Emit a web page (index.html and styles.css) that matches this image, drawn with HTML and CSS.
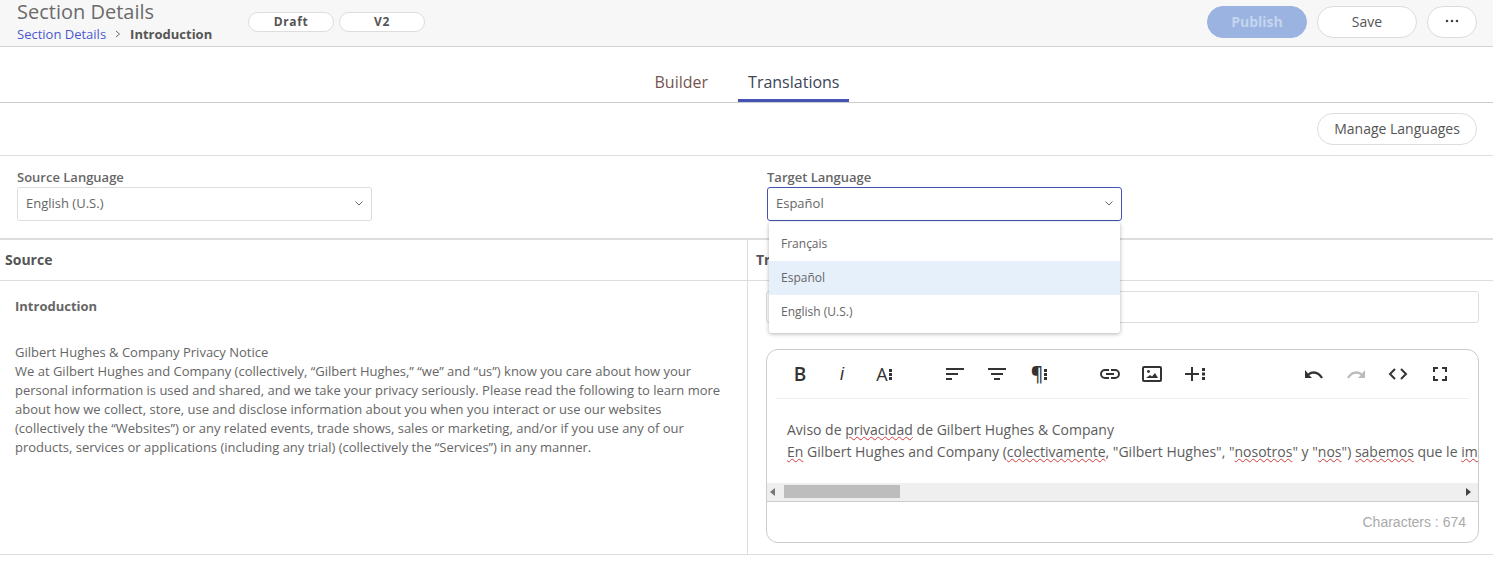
FILE: index.html
```html
<!DOCTYPE html>
<html lang="en">
<head>
    <meta charset="UTF-8">
    <title>Section Details</title>
    <link rel="stylesheet" href="styles.css">
</head>
<body>
    <div class="topbar">
        <div class="titles">
            <div class="page-title">Section Details</div>
            <div class="crumbs">
                <a href="#">Section Details</a>
                <svg class="crumb-sep" width="8" height="8" viewBox="0 0 8 8"><path d="M2 1l3.500 3-3.500 3" fill="none" stroke="#666" stroke-width="1"/></svg>
                <b>Introduction</b>
            </div>
        </div>
        <div class="pills">
            <span class="pill">Draft</span>
            <span class="pill">V2</span>
        </div>
        <div class="actions">
            <button class="btn publish">Publish</button>
            <button class="btn save">Save</button>
            <button class="btn more">
                <svg width="14" height="4" viewBox="0 0 14 4"><circle cx="2" cy="2" r="1.300" fill="#444"/><circle cx="7" cy="2" r="1.300" fill="#444"/><circle cx="12" cy="2" r="1.300" fill="#444"/></svg>
            </button>
        </div>
    </div>

    <div class="tabs">
        <span class="tab">Builder</span>
        <span class="tab active">Translations</span>
    </div>

    <div class="manage-row">
        <button class="btn manage">Manage Languages</button>
    </div>

    <div class="language-row">
        <div class="field">
            <label>Source Language</label>
            <div class="select">
                <span>English (U.S.)</span>
                <svg width="8" height="5" viewBox="0 0 8 5"><path d="M.5.500l3.500 3.500 3.500-3.500" fill="none" stroke="#666" stroke-width="1"/></svg>
            </div>
        </div>
        <div class="field">
            <label>Target Language</label>
            <div class="select open">
                <span>Español</span>
                <svg width="8" height="5" viewBox="0 0 8 5"><path d="M.5.500l3.500 3.500 3.500-3.500" fill="none" stroke="#666" stroke-width="1"/></svg>
                <ul class="options">
                    <li>Français</li>
                    <li class="selected">Español</li>
                    <li>English (U.S.)</li>
                </ul>
            </div>
        </div>
    </div>

    <div class="grid">
        <div class="cell head">Source</div>
        <div class="cell head right">Translation</div>
        <div class="cell source">
            <h4>Introduction</h4>
            <p>Gilbert Hughes &amp; Company Privacy Notice<br>We at Gilbert Hughes and Company (collectively, “Gilbert Hughes,” “we” and “us”) know you care about how your personal information is used and shared, and we take your privacy seriously. Please read the following to learn more about how we collect, store, use and disclose information about you when you interact or use our websites (collectively the “Websites”) or any related events, trade shows, sales or marketing, and/or if you use any of our products, services or applications (including any trial) (collectively the “Services”) in any manner.</p>
        </div>
        <div class="cell right target">
            <div class="title-input"></div>
            <div class="editor">
                <div class="toolbar">
                    <div class="tool-group">
                        <span class="tool glyph bold">B</span>
                        <span class="tool glyph ital">i</span>
                        <span class="tool glyph">A<svg class="dots" width="3" height="11" viewBox="0 0 3 11"><path d="M0 0h3v3H0zM0 4h3v3H0zM0 8h3v3H0z" fill="#333"/></svg></span>
                    </div>
                    <div class="tool-group">
                        <span class="tool"><svg width="18" height="12" viewBox="0 0 18 12"><path d="M0 0h18v2H0zM0 5h12v2H0zM0 10h6v2H0z" fill="#333"/></svg></span>
                        <span class="tool"><svg width="18" height="12" viewBox="0 0 18 12"><path d="M0 0h18v2H0zM3 5h12v2H3zM6 10h6v2H6z" fill="#333"/></svg></span>
                        <span class="tool glyph para">¶<svg class="dots" width="3" height="11" viewBox="0 0 3 11"><path d="M0 0h3v3H0zM0 4h3v3H0zM0 8h3v3H0z" fill="#333"/></svg></span>
                    </div>
                    <div class="tool-group">
                        <span class="tool"><svg width="20" height="10" viewBox="0 0 20 10"><path d="M9 1H5a4 4 0 0 0 0 8h4M11 1h4a4 4 0 0 1 0 8h-4M6 5h8" fill="none" stroke="#333" stroke-width="1.900"/></svg></span>
                        <span class="tool"><svg width="20" height="16" viewBox="0 0 20 16"><rect x="1" y="1" width="18" height="14" rx="1" fill="none" stroke="#333" stroke-width="2"/><circle cx="6.500" cy="5.500" r="1.400" fill="#333"/><path d="M4 12l4-3 2 1.500 3-3.500 3 5z" fill="#333"/></svg></span>
                        <span class="tool"><svg width="21" height="14" viewBox="0 0 21 14"><path d="M7 0h2v6h6v2H9v6H7V8H1V6h6zM18 1h3v3h-3zM18 5.500h3v3h-3zM18 10h3v3h-3z" fill="#333"/></svg></span>
                    </div>
                    <div class="tool-group end">
                        <span class="tool"><svg width="18" height="9" viewBox="0 0 18 9"><path d="M0 0v8h7L4.300 5.300C7.500 2.800 12.500 3.200 16 8.500L18 7.500C14 .5 7.500-.5 3 3.500z" fill="#333"/></svg></span>
                        <span class="tool"><svg width="18" height="9" viewBox="0 0 18 9"><path d="M18 0v8h-7l2.700-2.700C10.500 2.800 5.500 3.200 2 8.500L0 7.500C4 .5 10.500-.5 15 3.500z" fill="#bbb"/></svg></span>
                        <span class="tool"><svg width="20" height="12" viewBox="0 0 20 12"><path d="M7 1L2 6l5 5M13 1l5 5-5 5" fill="none" stroke="#333" stroke-width="2"/></svg></span>
                        <span class="tool"><svg width="14" height="14" viewBox="0 0 14 14"><path d="M5 1H1v4M9 1h4v4M5 13H1V9M9 13h4V9" fill="none" stroke="#333" stroke-width="2"/></svg></span>
                    </div>
                </div>
                <div class="editor-text">
                    <div>Aviso de <u>privacidad</u> de Gilbert Hughes &amp; Company</div>
                    <div><u>En</u> Gilbert Hughes and Company (<u>colectivamente</u>, "Gilbert Hughes", "<u>nosotros</u>" y "<u>nos</u>") <u>sabemos</u> que le <u>importa</u> cómo se utiliza y comparte su información personal</div>
                </div>
                <div class="scrollbar">
                    <svg width="5" height="8" viewBox="0 0 5 8"><path d="M5 0v8L0 4z" fill="#777"/></svg>
                    <div class="thumb"></div>
                    <svg class="arrow-right" width="5" height="8" viewBox="0 0 5 8"><path d="M0 0v8l5-4z" fill="#444"/></svg>
                </div>
                <div class="counter">Characters : 674</div>
            </div>
        </div>
    </div>
</body>
</html>
```

FILE: styles.css
```css
* {
    box-sizing: border-box;
}

body {
    margin: 0;
    font-family: "Open Sans", sans-serif;
    font-size: 13px;
    color: #666;
    background-color: #fff;
    overflow: hidden;
}

button {
    font-family: inherit;
}

/* Top bar */
.topbar {
    display: flex;
    align-items: flex-start;
    height: 47px;
    padding-left: 17px;
    padding-right: 16px;
    background-color: #f7f7f7;
    border-bottom: 1px solid #d4d4d4;
}

.titles {
    width: 231px;
}

.page-title {
    height: 25px;
    font-size: 20px;
    line-height: 23px;
    color: #6b6b6b;
}

.crumbs {
    display: flex;
    align-items: center;
    height: 18px;
    line-height: 18px;
}

.crumbs a {
    color: #4a57d0;
    text-decoration: none;
}

.crumb-sep {
    margin: 0 8px;
}

.crumbs b {
    color: #555;
}

.pills {
    display: flex;
    gap: 5px;
    margin-top: 12px;
}

.pill {
    width: 86px;
    height: 20px;
    border: 1px solid #ddd;
    border-radius: 10px;
    background-color: #fff;
    font-size: 12px;
    font-weight: 700;
    line-height: 18px;
    letter-spacing: 0.6px;
    text-align: center;
    color: #555;
}

.actions {
    display: flex;
    gap: 10px;
    margin-top: 6px;
    margin-left: auto;
}

.btn {
    height: 32px;
    padding: 0 0 2px;
    border: 1px solid #ddd;
    border-radius: 16px;
    background-color: #fff;
    font-size: 14px;
    color: #555;
}

.publish {
    width: 100px;
    border-color: #9ab3e0;
    background-color: #9ab3e0;
    font-weight: 700;
    color: #c5d5f0;
}

.save {
    width: 100px;
}

.more {
    width: 50px;
}

.more svg {
    display: block;
    margin: 0 auto;
}

/* Tabs */
.tabs {
    display: flex;
    justify-content: center;
    gap: 20px;
    height: 56px;
    padding-left: 1px;
    border-bottom: 1px solid #ccc;
}

.tab {
    height: 55px;
    padding: 22px 10px 0;
    font-size: 16px;
    line-height: 26px;
    color: #75554f;
}

.tab.active {
    color: #3d4457;
    border-bottom: 3px solid #4553b5;
}

.manage-row {
    display: flex;
    justify-content: flex-end;
    height: 53px;
    padding: 10px 16px 0;
    border-bottom: 1px solid #ddd;
}

.manage {
    width: 160px;
}

/* Language selects */
.language-row {
    display: flex;
    height: 84px;
    padding: 12px 0 0 17px;
    border-bottom: 2px solid #ddd;
}

.field {
    flex: none;
    width: 750px;
}

.field label {
    display: block;
    height: 19px;
    font-weight: 600;
    line-height: 18px;
    color: #666;
}

.select {
    position: relative;
    display: flex;
    align-items: center;
    justify-content: space-between;
    width: 355px;
    height: 34px;
    padding: 0 8px 2px 8px;
    border: 1px solid #ddd;
    border-radius: 3px;
    background-color: #fff;
}

.select.open {
    border-color: #4553b5;
}

.options {
    position: absolute;
    z-index: 5;
    top: 34px;
    left: 1px;
    width: 351px;
    margin: 0;
    padding: 5px 0 4px;
    list-style: none;
    background-color: #fff;
    border-radius: 3px;
    box-shadow: 0 1px 4px rgba(0, 0, 0, 0.3);
    font-size: 12px;
}

.options li {
    height: 34px;
    padding-left: 12px;
    line-height: 34px;
}

.options .selected {
    background-color: #e6f0fb;
}

/* Source / translation table */
.grid {
    display: grid;
    grid-template-columns: 747px minmax(0, 1fr);
    grid-template-rows: 41px 273px;
    border-bottom: 1px solid #ddd;
}

.cell.head {
    padding-left: 5px;
    border-bottom: 1px solid #ddd;
    font-size: 14px;
    font-weight: 700;
    line-height: 39px;
    color: #555;
}

.cell.right {
    border-left: 1px solid #ddd;
}

.cell.head.right {
    padding-left: 8px;
}

.source {
    padding: 16px 20px 0 15px;
}

.source h4 {
    margin: 0;
    font-size: 13px;
    line-height: 18px;
    font-weight: 700;
    color: #666;
}

.source p {
    margin: 28px 0 0;
    line-height: 19px;
}

.target {
    padding: 10px 14px 0 18px;
}

.title-input {
    height: 32px;
    border: 1px solid #ddd;
    border-radius: 3px;
}

.editor {
    margin-top: 26px;
    height: 194px;
    border: 1px solid #ccc;
    border-radius: 12px;
    overflow: hidden;
}

.toolbar {
    display: flex;
    gap: 29px;
    height: 49px;
    margin: 0 9px;
    padding: 5px 8px 0 3px;
    border-bottom: 1px solid #eee;
}

.tool-group {
    display: flex;
}

.tool-group.end {
    margin-left: auto;
}

.tool {
    display: flex;
    align-items: center;
    justify-content: center;
    width: 42px;
    height: 38px;
}

.glyph {
    gap: 1px;
    font-size: 18px;
    color: #333;
}

.bold {
    font-size: 19px;
    font-weight: 600;
}

.ital {
    font-family: "Liberation Sans", sans-serif;
    font-style: italic;
}

.para {
    font-size: 19px;
    font-weight: 600;
}

.editor-text {
    height: 84px;
    padding: 20px 0 0 20px;
    font-size: 14px;
    line-height: 22px;
    white-space: nowrap;
    overflow: hidden;
    color: #5c5c5c;
}

.editor-text u {
    text-decoration: underline wavy #d43a3a 1px;
    text-underline-offset: 1px;
}

.scrollbar {
    display: flex;
    align-items: center;
    height: 19px;
    padding: 0 7px 1px 3px;
    background-color: #efefef;
    border-bottom: 1px solid #ccc;
}

.thumb {
    width: 116px;
    height: 13px;
    margin-left: 9px;
    background-color: #bdbdbd;
}

.arrow-right {
    margin-left: auto;
}

.counter {
    padding-right: 12px;
    font-family: "Liberation Sans", Arial, sans-serif;
    font-size: 14px;
    line-height: 40px;
    text-align: right;
    color: #aaa;
}
```
